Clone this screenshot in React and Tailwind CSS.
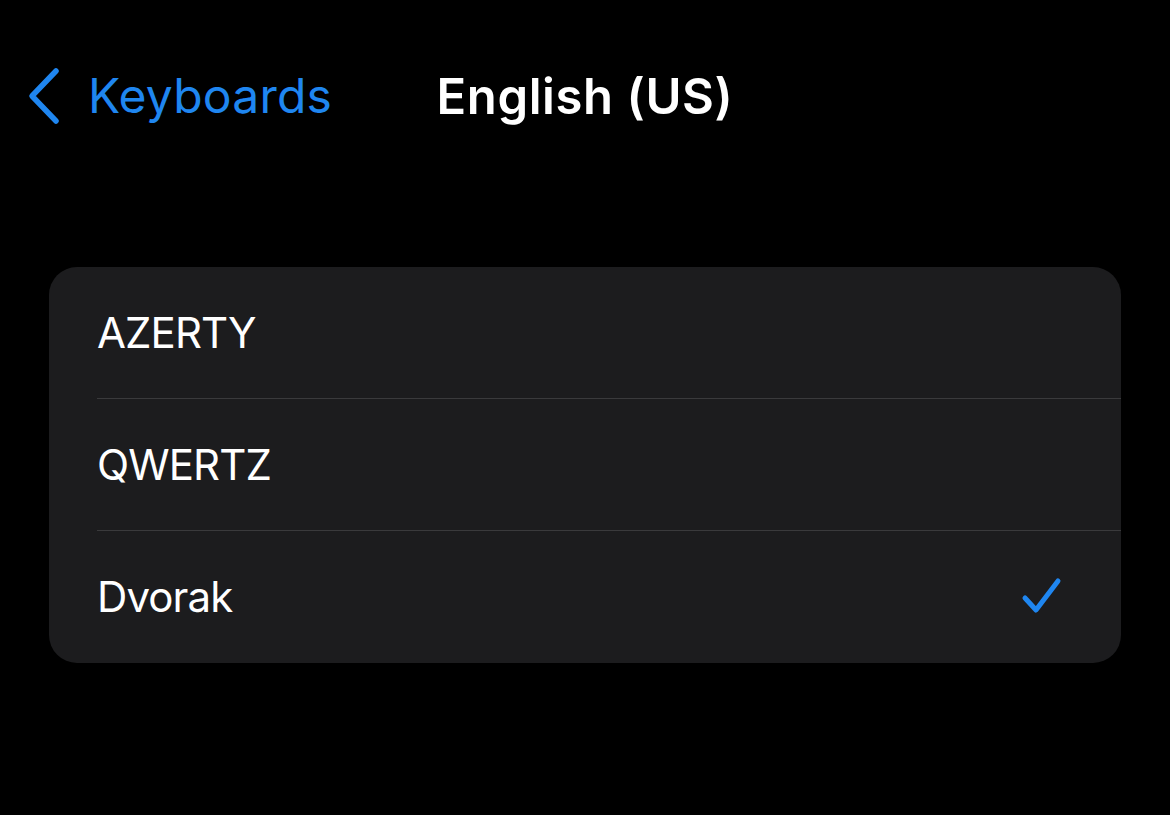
import React from 'react';

const options = ['AZERTY', 'QWERTZ', 'Dvorak'];

function ChevronLeft() {
    return (
        <svg width="36" height="60" viewBox="0 0 36 60" fill="none">
            <path d="M31 5 L7 30 L31 55" stroke="#1f86f0" strokeWidth="5.5" strokeLinecap="round" strokeLinejoin="round" />
        </svg>
    );
}

function Check() {
    return (
        <svg width="42" height="40" viewBox="0 0 42 40" fill="none">
            <path d="M4 21 L15 33 L37 4" stroke="#1f86f0" strokeWidth="5" strokeLinecap="round" strokeLinejoin="round" />
        </svg>
    );
}

export default function App() {
    const selected = 'Dvorak';

    return (
        <div className="w-[1170px] h-[815px] bg-black text-white font-['Inter','Noto_Sans',sans-serif] overflow-hidden">
            {/* Nav bar */}
            <div className="grid grid-cols-[1fr_auto_1fr] items-center h-[96px] mt-[48px] px-[25px]">
                <button className="flex items-center gap-[27px] text-[#1f86f0] text-[48px] leading-none tracking-[0.2px]">
                    <ChevronLeft />
                    <span>Keyboards</span>
                </button>
                <h1 className="text-[49px] font-semibold leading-none tracking-[0.6px]">English (US)</h1>
                <div />
            </div>

            {/* List */}
            <div className="mx-[49px] mt-[123px] bg-[#1c1c1e] rounded-[28px] overflow-hidden">
                {options.map((opt, i) => (
                    <div key={opt} className="pl-[48px]">
                        <div
                            className={`flex items-center justify-between h-[132px] pr-[58px] ${
                                i < options.length - 1 ? 'border-b border-[#3a3a3c]' : ''
                            }`}
                        >
                            <span className="text-[42px] leading-none tracking-[-0.9px]">{opt}</span>
                            {opt === selected && <Check />}
                        </div>
                    </div>
                ))}
            </div>
        </div>
    );
}
